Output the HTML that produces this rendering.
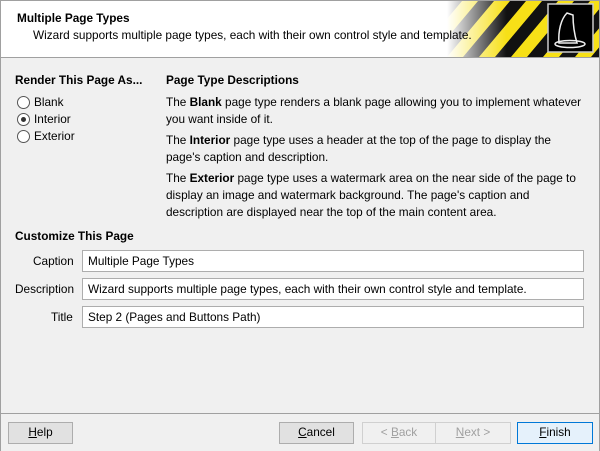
<!DOCTYPE html>
<html><head><style>
*{margin:0;padding:0;box-sizing:border-box}
body{width:600px;height:451px;background:#f0f0f0;font-family:"Liberation Sans",sans-serif;font-size:11.8px;color:#000;position:relative;overflow:hidden}
.frame{position:absolute;left:0;top:0;width:600px;height:451px;border:1px solid #a0a0a0;border-bottom:none}
.a{position:absolute;white-space:nowrap;line-height:15px}
b{font-weight:bold}
.tb{position:absolute;left:82px;width:502px;height:22px;background:#fff;border:1px solid #adadad;padding:3px 5px;line-height:14px}
.btn{position:absolute;top:422px;height:22px;border:1px solid #adadad;background:#e1e1e1;text-align:center;line-height:19px}
.dis{color:#a0a0a0;background:#f0f0f0;border-color:#d0d0d0}
.rad{position:absolute;left:17px;width:13px;height:13px;border:1px solid #555;border-radius:50%;background:#fff}
</style></head><body>
<div style="position:absolute;left:0;top:0;width:600px;height:58px;background:#fff;border-bottom:1px solid #a0a0a0"></div>
<svg style="position:absolute;left:430px;top:1px" width="170" height="56">
<defs>
<linearGradient id="g" x1="0" x2="1"><stop offset="0.1" stop-color="#fff" stop-opacity="1"/><stop offset="0.45" stop-color="#fff" stop-opacity="0"/></linearGradient>
<pattern id="p" width="32" height="56" patternUnits="userSpaceOnUse" patternTransform="skewX(-40)"><rect width="32" height="56" fill="#111"/><rect width="16" height="56" fill="#f7e017"/></pattern>
</defs>
<rect width="170" height="56" fill="url(#p)"/>
<rect width="170" height="56" fill="url(#g)"/>
<rect x="118" y="3" width="45" height="48" fill="#000" stroke="#ccc" stroke-width="1.5"/>
<path d="M137 12 C131 18,128 30,129 42 L147 42 C144 32,143 22,143 14 Z" fill="none" stroke="#eee" stroke-width="1.5"/>
<ellipse cx="140" cy="43" rx="15" ry="3.5" fill="none" stroke="#eee" stroke-width="1.5"/>
</svg>
<div class="a" style="left:17px;top:11px"><b>Multiple Page Types</b></div>
<div class="a" style="left:33px;top:28px">Wizard supports multiple page types, each with their own control style and template.</div>

<div class="a" style="left:15px;top:73px"><b>Render This Page As...</b></div>
<div class="rad" style="top:96px"></div><div class="a" style="left:34px;top:95px">Blank</div>
<div class="rad" style="top:113px"></div><div style="position:absolute;left:21px;top:117px;width:5px;height:5px;border-radius:50%;background:#333"></div><div class="a" style="left:34px;top:112px">Interior</div>
<div class="rad" style="top:130px"></div><div class="a" style="left:34px;top:129px">Exterior</div>

<div class="a" style="left:166px;top:73px"><b>Page Type Descriptions</b></div>
<div class="a" style="left:166px;top:95px">The <b>Blank</b> page type renders a blank page allowing you to implement whatever</div>
<div class="a" style="left:166px;top:112px">you want inside of it.</div>
<div class="a" style="left:166px;top:133px">The <b>Interior</b> page type uses a header at the top of the page to display the</div>
<div class="a" style="left:166px;top:150px">page's caption and description.</div>
<div class="a" style="left:166px;top:171px">The <b>Exterior</b> page type uses a watermark area on the near side of the page to</div>
<div class="a" style="left:166px;top:188px">display an image and watermark background. The page's caption and</div>
<div class="a" style="left:166px;top:205px">description are displayed near the top of the main content area.</div>

<div class="a" style="left:15px;top:229px"><b>Customize This Page</b></div>
<div class="a" style="left:33px;top:254px">Caption</div>
<div class="tb" style="top:250px">Multiple Page Types</div>
<div class="a" style="left:15px;top:282px">Description</div>
<div class="tb" style="top:278px">Wizard supports multiple page types, each with their own control style and template.</div>
<div class="a" style="left:51px;top:310px">Title</div>
<div class="tb" style="top:306px">Step 2 (Pages and Buttons Path)</div>

<div style="position:absolute;left:0;top:413px;width:600px;height:1px;background:#a0a0a0"></div>
<div class="btn" style="left:8px;width:65px"><u>H</u>elp</div>
<div class="btn" style="left:279px;width:75px"><u>C</u>ancel</div>
<div class="btn dis" style="left:362px;width:74px">&lt; <u>B</u>ack</div>
<div class="btn dis" style="left:435px;width:76px"><u>N</u>ext &gt;</div>
<div class="btn" style="left:517px;width:76px;border:1px solid #0078d7;background:#e5f1fb"><u>F</u>inish</div>
<div class="frame"></div>
</body></html>
